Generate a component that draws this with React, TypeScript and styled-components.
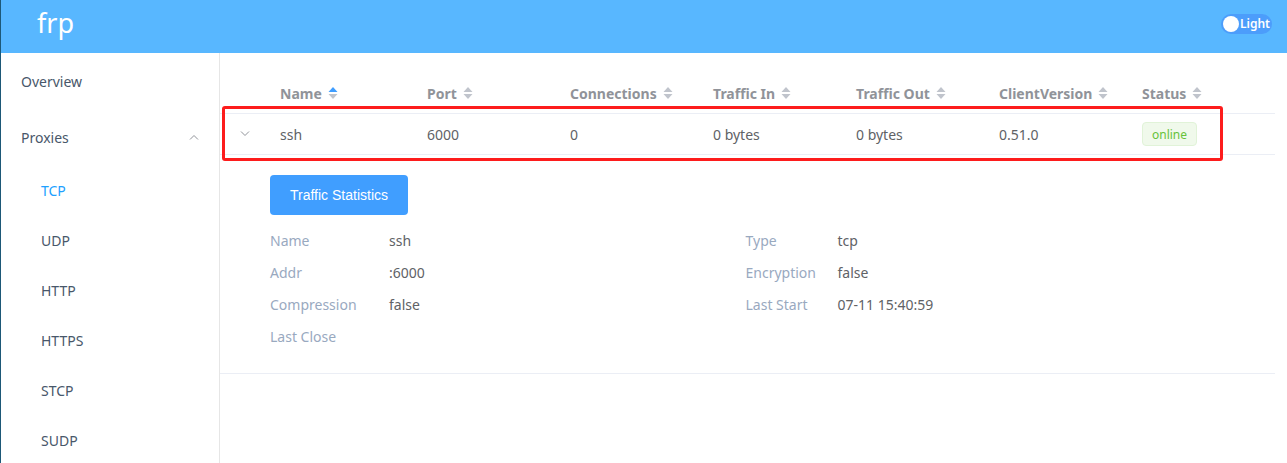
import React from 'react';
import styled, { createGlobalStyle } from 'styled-components';

const GlobalStyle = createGlobalStyle`
    html, body {
        margin: 0;
        padding: 0;
        background: #fff;
        font-family: "Noto Sans", "Liberation Sans", sans-serif;
    }
`;

const Shell = styled.div`
    height: 463px;
    overflow: hidden;
    border-left: 1px solid #1d5877;
    display: flex;
    flex-direction: column;
`;

const Header = styled.header`
    height: 53px;
    flex-shrink: 0;
    background: #58b7ff;
    display: flex;
    align-items: center;
    justify-content: space-between;
    padding: 0 15px 0 36px;
`;

const Brand = styled.div`
    color: #fff;
    font-size: 27px;
    line-height: 1;
    margin-top: -8px;
`;

const Toggle = styled.div`
    display: flex;
    align-items: center;
    height: 20px;
    width: 51px;
    border-radius: 10px;
    background: #4c9dfb;
    box-sizing: border-box;
    padding: 0 2px;
    gap: 1px;
    margin-top: -6px;
`;

const Knob = styled.span`
    width: 16px;
    height: 16px;
    border-radius: 50%;
    background: #fff;
`;

const ToggleText = styled.span`
    color: #fff;
    font-size: 12px;
    font-weight: 600;
`;

const Body = styled.div`
    flex: 1;
    display: flex;
    min-height: 0;
`;

const Sidebar = styled.nav`
    width: 218px;
    flex-shrink: 0;
    border-right: 1px solid #e6e6e6;
    display: flex;
    flex-direction: column;
`;

const MenuItem = styled.div<{ sub?: boolean; active?: boolean }>`
    height: ${(p) => (p.sub ? '50px' : '56px')};
    flex-shrink: 0;
    display: flex;
    align-items: center;
    justify-content: space-between;
    padding: ${(p) => (p.sub ? '0 0 0 40px' : '0 20px 0 20px')};
    font-size: 14px;
    color: ${(p) => (p.active ? '#20a0ff' : '#48576a')};
`;

const Main = styled.main`
    flex: 1;
    padding: 20px 12px 0 0;
    min-width: 0;
`;

const TableWrap = styled.div`
    position: relative;
    width: 1055px;
`;

const Grid = styled.div`
    display: grid;
    grid-template-columns: 50px 147px repeat(6, 143px);
    align-items: center;
    border-bottom: 1px solid #ebeef5;
`;

const HeadCell = styled.div`
    height: 40px;
    display: flex;
    align-items: center;
    gap: 6px;
    padding: 0 10px;
    font-size: 14px;
    font-weight: 700;
    color: #909399;
`;

const Cell = styled.div`
    height: 40px;
    display: flex;
    align-items: center;
    padding: 0 10px;
    font-size: 14px;
    color: #606266;
`;

const ExpandCell = styled(Cell)`
    justify-content: center;
    padding: 0;
    color: #909399;
`;

const Tag = styled.span`
    display: inline-flex;
    align-items: center;
    height: 22px;
    padding: 0 9px;
    font-size: 12px;
    color: #67c23a;
    background: #f0f9eb;
    border: 1px solid #e1f3d8;
    border-radius: 4px;
`;

const Expanded = styled.div`
    padding: 20px 54px 21px 50px;
    border-bottom: 1px solid #ebeef5;
`;

const Button = styled.button`
    height: 40px;
    width: 138px;
    border: none;
    border-radius: 4px;
    background: #409eff;
    color: #fff;
    font-family: "Liberation Sans", Arial, sans-serif;
    font-size: 14px;
    cursor: pointer;
    margin-bottom: 9px;
`;

const Form = styled.div`
    display: grid;
    grid-template-columns: 1fr 1fr;
`;

const FormCol = styled.div`
    display: flex;
    flex-direction: column;
`;

const FormRow = styled.div`
    height: 32px;
    display: flex;
    align-items: center;
    font-size: 14px;
`;

const Label = styled.span<{ width: number }>`
    width: ${(p) => p.width}px;
    flex-shrink: 0;
    color: #99a9bf;
`;

const Value = styled.span`
    color: #606266;
`;

const Highlight = styled.div`
    position: absolute;
    left: 2px;
    top: 33px;
    width: 1001px;
    height: 55px;
    border: 3px solid #fd1c1c;
    border-radius: 3px;
    box-sizing: border-box;
    pointer-events: none;
`;

const SortIcon = ({ active }: { active?: boolean }) => (
    <svg width="10" height="14" viewBox="0 0 10 14">
        <path d="M5 1 L9.5 6 L0.5 6 Z" fill={active ? '#409eff' : '#c0c4cc'} />
        <path d="M5 13 L9.5 8 L0.5 8 Z" fill="#c0c4cc" />
    </svg>
);

const Chevron = ({ up }: { up?: boolean }) => (
    <svg width="10" height="6" viewBox="0 0 10 6">
        <path
            d={up ? 'M1 5.5 L5 1.5 L9 5.5' : 'M1 0.5 L5 4.5 L9 0.5'}
            fill="none"
            stroke="#909399"
            strokeWidth="1"
        />
    </svg>
);

const columns = ['Name', 'Port', 'Connections', 'Traffic In', 'Traffic Out', 'ClientVersion', 'Status'];
const menu = ['TCP', 'UDP', 'HTTP', 'HTTPS', 'STCP', 'SUDP'];

const leftInfo: [string, string][] = [
    ['Name', 'ssh'],
    ['Addr', ':6000'],
    ['Compression', 'false'],
    ['Last Close', ''],
];

const rightInfo: [string, string][] = [
    ['Type', 'tcp'],
    ['Encryption', 'false'],
    ['Last Start', '07-11 15:40:59'],
];

const App = () => {
    return (
        <Shell>
            <GlobalStyle />
            <Header>
                <Brand>frp</Brand>
                <Toggle>
                    <Knob />
                    <ToggleText>Light</ToggleText>
                </Toggle>
            </Header>
            <Body>
                <Sidebar>
                    <MenuItem>Overview</MenuItem>
                    <MenuItem>
                        Proxies
                        <Chevron up />
                    </MenuItem>
                    {menu.map((m) => (
                        <MenuItem key={m} sub active={m === 'TCP'}>
                            {m}
                        </MenuItem>
                    ))}
                </Sidebar>
                <Main>
                    <TableWrap>
                        <Grid>
                            <HeadCell />
                            {columns.map((c) => (
                                <HeadCell key={c}>
                                    {c}
                                    <SortIcon active={c === 'Name'} />
                                </HeadCell>
                            ))}
                        </Grid>
                        <Grid>
                            <ExpandCell>
                                <Chevron />
                            </ExpandCell>
                            <Cell>ssh</Cell>
                            <Cell>6000</Cell>
                            <Cell>0</Cell>
                            <Cell>0 bytes</Cell>
                            <Cell>0 bytes</Cell>
                            <Cell>0.51.0</Cell>
                            <Cell>
                                <Tag>online</Tag>
                            </Cell>
                        </Grid>
                        <Expanded>
                            <Button>Traffic Statistics</Button>
                            <Form>
                                <FormCol>
                                    {leftInfo.map(([k, v]) => (
                                        <FormRow key={k}>
                                            <Label width={119}>{k}</Label>
                                            <Value>{v}</Value>
                                        </FormRow>
                                    ))}
                                </FormCol>
                                <FormCol>
                                    {rightInfo.map(([k, v]) => (
                                        <FormRow key={k}>
                                            <Label width={92}>{k}</Label>
                                            <Value>{v}</Value>
                                        </FormRow>
                                    ))}
                                </FormCol>
                            </Form>
                        </Expanded>
                        <Highlight />
                    </TableWrap>
                </Main>
            </Body>
        </Shell>
    );
};

export default App;
